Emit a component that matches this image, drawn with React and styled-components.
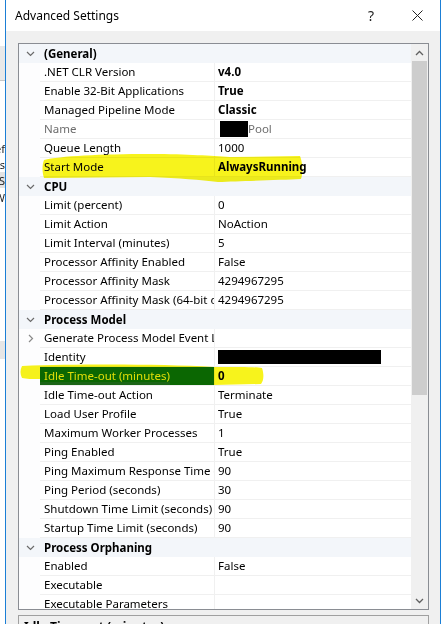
import React from "react";
import styled, { createGlobalStyle } from "styled-components";

const lineColor = "#f0f0f0";
const catColor = "#f3f6fa";

const GlobalStyle = createGlobalStyle`
  body {
    margin: 0;
    background: #fff;
    overflow: hidden;
  }
`;

const Screen = styled.div`
  position: relative;
  width: 443px;
  height: 624px;
  display: flex;
  overflow: hidden;
  background: #fff;
  font-family: "Noto Sans", "Open Sans", sans-serif;
  font-size: 11.5px;
  color: #000;
`;

const BackStrip = styled.div`
  width: 5px;
  flex-shrink: 0;
  display: flex;
  flex-direction: column;
  overflow: hidden;
  background: #fff;
`;

const BackPiece = styled.div`
  height: ${(p) => p.$h}px;
  flex-shrink: 0;
  background: ${(p) => p.$bg || "#fff"};
  border-bottom: ${(p) => (p.$line ? "1px solid #c8c8c8" : "none")};
  display: flex;
  justify-content: flex-end;
  align-items: center;
  white-space: nowrap;
  font-size: 11px;
  color: #222;
`;

const Window = styled.div`
  width: 436px;
  flex-shrink: 0;
  box-sizing: border-box;
  border-left: 1px solid #1b7fd6;
  border-right: 1px solid #1b7fd6;
  display: flex;
  flex-direction: column;
`;

const TitleBar = styled.div`
  height: 31px;
  flex-shrink: 0;
  display: flex;
  align-items: center;
  background: #fff;
  padding-left: 9px;
  font-size: 12px;
`;

const TitleText = styled.div`
  flex: 1;
`;

const CaptionButton = styled.div`
  width: 46px;
  height: 31px;
  display: flex;
  align-items: center;
  justify-content: center;
  font-size: 14px;
  color: #222;
`;

const Body = styled.div`
  flex: 1;
  background: #f0f0f0;
  padding: 12px 11px 0 12px;
  display: flex;
  flex-direction: column;
  gap: 5px;
  min-height: 0;
`;

const Grid = styled.div`
  height: 567px;
  flex-shrink: 0;
  box-sizing: border-box;
  border: 1px solid #8a8d93;
  background: #fff;
  display: flex;
`;

const Rows = styled.div`
  flex: 1;
  display: flex;
  flex-direction: column;
  overflow: hidden;
`;

const Row = styled.div`
  display: grid;
  grid-template-columns: 21px 175px 1fr;
  height: 19px;
  flex-shrink: 0;
  background: ${(p) => (p.$category ? catColor : "#fff")};
`;

const Margin = styled.div`
  display: flex;
  align-items: center;
  justify-content: center;
  padding-left: 1px;
  background: ${(p) => (p.$category ? catColor : "#fdfdfe")};
`;

const NameCell = styled.div`
  box-sizing: border-box;
  padding-left: 4px;
  line-height: 18px;
  white-space: nowrap;
  overflow: hidden;
  border-right: 1px solid ${lineColor};
  border-bottom: 1px solid ${lineColor};
  color: ${(p) => (p.$mark ? "#e8e83c" : p.$dim ? "#6d6d6d" : "#000")};
  background: ${(p) =>
    p.$mark
      ? "linear-gradient(#1d6bd2, #1d6bd2) no-repeat left bottom / 130px 3px, #0b6c0b"
      : "transparent"};
`;

const ValueCell = styled.div`
  box-sizing: border-box;
  padding-left: 3px;
  line-height: 18px;
  white-space: nowrap;
  overflow: hidden;
  display: flex;
  align-items: center;
  border-bottom: 1px solid ${lineColor};
  font-weight: ${(p) => (p.$bold ? 700 : 400)};
  color: ${(p) => (p.$dim ? "#6d6d6d" : "#000")};
`;

const CategoryCell = styled.div`
  grid-column: 2 / 4;
  padding-left: 4px;
  line-height: 19px;
  font-weight: 700;
  white-space: nowrap;
`;

const Redacted = styled.span`
  display: inline-block;
  flex-shrink: 0;
  width: ${(p) => p.$w}px;
  height: ${(p) => p.$h}px;
  margin-left: ${(p) => p.$ml || 0}px;
  background: #000;
`;

const ScrollBar = styled.div`
  width: 17px;
  flex-shrink: 0;
  background: #f0f0f0;
  display: flex;
  flex-direction: column;
`;

const ScrollArrow = styled.div`
  height: 17px;
  flex-shrink: 0;
  display: flex;
  align-items: center;
  justify-content: center;
`;

const Thumb = styled.div`
  height: 334px;
  margin: 0 1px;
  background: #cdcdcd;
`;

const Track = styled.div`
  flex: 1;
`;

const Description = styled.div`
  flex: 1;
  border: 1px solid #a0a0a0;
  border-bottom: none;
  padding: 2px 5px;
  font-size: 12px;
  font-weight: 700;
  line-height: 18px;
`;

const Annotations = styled.svg`
  position: absolute;
  left: 0;
  top: 0;
  pointer-events: none;
  mix-blend-mode: multiply;
`;

const Chevron = ({ dir = "down" }) => (
  <svg width="9" height="9" viewBox="0 0 9 9">
    {dir === "down" ? (
      <polyline points="1,3 4.5,6.5 8,3" fill="none" stroke="#6a6a6a" strokeWidth="1.2" />
    ) : (
      <polyline points="3,1 6.5,4.5 3,8" fill="none" stroke="#8a8a8a" strokeWidth="1.2" />
    )}
  </svg>
);

const ScrollGlyph = ({ up }) => (
  <svg width="9" height="6" viewBox="0 0 9 6">
    <polyline
      points={up ? "1,5 4.5,1.5 8,5" : "1,1 4.5,4.5 8,1"}
      fill="none"
      stroke="#606060"
      strokeWidth="1.3"
    />
  </svg>
);

const sections = [
  {
    title: "(General)",
    items: [
      { name: ".NET CLR Version", value: "v4.0", bold: true },
      { name: "Enable 32-Bit Applications", value: "True", bold: true },
      { name: "Managed Pipeline Mode", value: "Classic", bold: true },
      { name: "Name", value: "Pool", dim: true, redact: { w: 28, h: 16, ml: 2 } },
      { name: "Queue Length", value: "1000" },
      { name: "Start Mode", value: "AlwaysRunning", bold: true },
    ],
  },
  {
    title: "CPU",
    items: [
      { name: "Limit (percent)", value: "0" },
      { name: "Limit Action", value: "NoAction" },
      { name: "Limit Interval (minutes)", value: "5" },
      { name: "Processor Affinity Enabled", value: "False" },
      { name: "Processor Affinity Mask", value: "4294967295" },
      { name: "Processor Affinity Mask (64-bit option)", value: "4294967295" },
    ],
  },
  {
    title: "Process Model",
    items: [
      { name: "Generate Process Model Event Log Entry", value: "", expand: true },
      { name: "Identity", value: "", redact: { w: 163, h: 14, ml: 0 } },
      { name: "Idle Time-out (minutes)", value: "0", bold: true, mark: true },
      { name: "Idle Time-out Action", value: "Terminate" },
      { name: "Load User Profile", value: "True" },
      { name: "Maximum Worker Processes", value: "1" },
      { name: "Ping Enabled", value: "True" },
      { name: "Ping Maximum Response Time (seconds)", value: "90" },
      { name: "Ping Period (seconds)", value: "30" },
      { name: "Shutdown Time Limit (seconds)", value: "90" },
      { name: "Startup Time Limit (seconds)", value: "90" },
    ],
  },
  {
    title: "Process Orphaning",
    items: [
      { name: "Enabled", value: "False" },
      { name: "Executable", value: "" },
      { name: "Executable Parameters", value: "" },
    ],
  },
];

const PropertyRow = ({ item }) => (
  <Row>
    <Margin>{item.expand && <Chevron dir="right" />}</Margin>
    <NameCell $dim={item.dim} $mark={item.mark}>
      {item.name}
    </NameCell>
    <ValueCell $bold={item.bold} $dim={item.dim}>
      {item.redact && (
        <Redacted $w={item.redact.w} $h={item.redact.h} $ml={item.redact.ml} />
      )}
      {item.value}
    </ValueCell>
  </Row>
);

const App = () => {
  return (
    <>
      <GlobalStyle />
      <Screen>
        <BackStrip>
          <BackPiece $h={46} />
          <BackPiece $h={34} $bg="#e9e9e9" $line />
          <BackPiece $h={60} />
          <BackPiece $h={15}>Pref</BackPiece>
          <BackPiece $h={16}>Items</BackPiece>
          <BackPiece $h={16} $bg="#e3e3e3">AS</BackPiece>
          <BackPiece $h={18}>AW</BackPiece>
          <BackPiece $h={135} />
          <BackPiece $h={18} $bg="#e6e6e6" />
          <BackPiece $h={250} />
        </BackStrip>
        <Window>
          <TitleBar>
            <TitleText>Advanced Settings</TitleText>
            <CaptionButton>?</CaptionButton>
            <CaptionButton>
              <svg width="11" height="11" viewBox="0 0 11 11">
                <path d="M0.5,0.5 L10.5,10.5 M10.5,0.5 L0.5,10.5" stroke="#222" strokeWidth="1" />
              </svg>
            </CaptionButton>
          </TitleBar>
          <Body>
            <Grid>
              <Rows>
                {sections.map((section) => (
                  <React.Fragment key={section.title}>
                    <Row $category>
                      <Margin $category>
                        <Chevron />
                      </Margin>
                      <CategoryCell>{section.title}</CategoryCell>
                    </Row>
                    {section.items.map((item) => (
                      <PropertyRow key={item.name} item={item} />
                    ))}
                  </React.Fragment>
                ))}
              </Rows>
              <ScrollBar>
                <ScrollArrow>
                  <ScrollGlyph up />
                </ScrollArrow>
                <Thumb />
                <Track />
                <ScrollArrow>
                  <ScrollGlyph />
                </ScrollArrow>
              </ScrollBar>
            </Grid>
            <Description>Idle Time-out (minutes)</Description>
          </Body>
        </Window>
        <Annotations width="443" height="624" viewBox="0 0 443 624">
          <path
            d="M44,160 C60,156 100,154 150,154 C190,154 210,156 230,157 L300,156 C303,164 303,173 301,179 C280,180 240,181 218,182 C200,180 180,178 150,177 L44,178 C42,172 42,165 44,160 Z"
            fill="#f7f31c"
          />
          <path
            d="M22,366 C80,364 160,364 214,367 C240,367 255,367 262,368 C264,374 264,380 261,384 L214,385 L40,385 L40,379 C32,379 26,379 22,378 C20,374 20,370 22,366 Z"
            fill="#f7f31c"
          />
        </Annotations>
      </Screen>
    </>
  );
};

export default App;
